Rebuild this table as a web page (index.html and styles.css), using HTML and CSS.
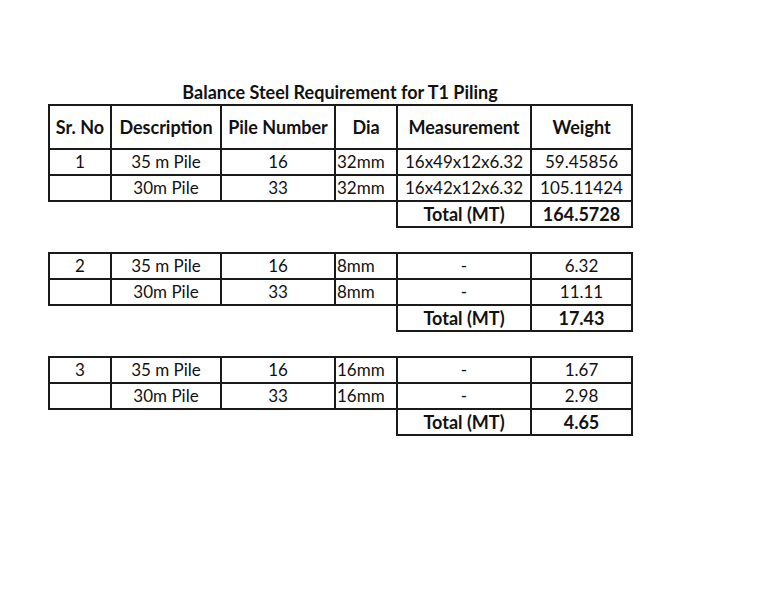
FILE: index.html
```html
<!DOCTYPE html>
<html>
<head>
<meta charset="utf-8">
<link rel="stylesheet" href="styles.css">
</head>
<body>
<div class="sheet">
  <div class="title">Balance Steel Requirement for T1 Piling</div>
  <table class="grid">
    <colgroup><col class="c1"><col class="c2"><col class="c3"><col class="c4"><col class="c5"><col class="c6"></colgroup>
    <tr class="head"><th>Sr. No</th><th>Description</th><th>Pile Number</th><th>Dia</th><th>Measurement</th><th>Weight</th></tr>
    <tr><td>1</td><td>35 m Pile</td><td>16</td><td class="left">32mm</td><td>16x49x12x6.32</td><td>59.45856</td></tr>
    <tr><td></td><td>30m Pile</td><td>33</td><td class="left">32mm</td><td>16x42x12x6.32</td><td>105.11424</td></tr>
    <tr class="total"><td class="blank"></td><td class="blank"></td><td class="blank"></td><td class="blank"></td><td>Total (MT)</td><td>164.5728</td></tr>
  </table>
  <table class="grid">
    <colgroup><col class="c1"><col class="c2"><col class="c3"><col class="c4"><col class="c5"><col class="c6"></colgroup>
    <tr><td>2</td><td>35 m Pile</td><td>16</td><td class="left">8mm</td><td>-</td><td>6.32</td></tr>
    <tr><td></td><td>30m Pile</td><td>33</td><td class="left">8mm</td><td>-</td><td>11.11</td></tr>
    <tr class="total"><td class="blank"></td><td class="blank"></td><td class="blank"></td><td class="blank"></td><td>Total (MT)</td><td>17.43</td></tr>
  </table>
  <table class="grid">
    <colgroup><col class="c1"><col class="c2"><col class="c3"><col class="c4"><col class="c5"><col class="c6"></colgroup>
    <tr><td>3</td><td>35 m Pile</td><td>16</td><td class="left">16mm</td><td>-</td><td>1.67</td></tr>
    <tr><td></td><td>30m Pile</td><td>33</td><td class="left">16mm</td><td>-</td><td>2.98</td></tr>
    <tr class="total"><td class="blank"></td><td class="blank"></td><td class="blank"></td><td class="blank"></td><td>Total (MT)</td><td>4.65</td></tr>
  </table>
</div>
</body>
</html>
```
FILE: styles.css
```css
html, body {
  margin: 0;
  padding: 0;
  background: #fff;
}
.sheet {
  width: 584px;
  margin-left: 48px;
  padding-top: 80px;
  font-family: Lato, "Liberation Sans", sans-serif;
  color: #111;
  font-size: 17px;
}
.title {
  font-weight: bold;
  font-size: 18px;
  text-align: center;
  height: 24px;
  line-height: 24px;
}
.grid {
  border-collapse: collapse;
  table-layout: fixed;
  width: 584px;
  margin-bottom: 24px;
}
.c1 { width: 62px; }
.c2 { width: 110px; }
.c3 { width: 114px; }
.c4 { width: 62px; }
.c5 { width: 134px; }
.c6 { width: 101px; }
.grid td, .grid th {
  border: 2px solid #1a1a1a;
  text-align: center;
  height: 24px;
  line-height: 20px;
  padding: 0 1px;
  white-space: nowrap;
  overflow: hidden;
}
.grid th {
  height: 42px;
  font-weight: bold;
  font-size: 18px;
}
.grid td.left {
  text-align: left;
}
.grid .total td {
  font-weight: bold;
  font-size: 18px;
}
.grid td.blank {
  border: none;
}
```
